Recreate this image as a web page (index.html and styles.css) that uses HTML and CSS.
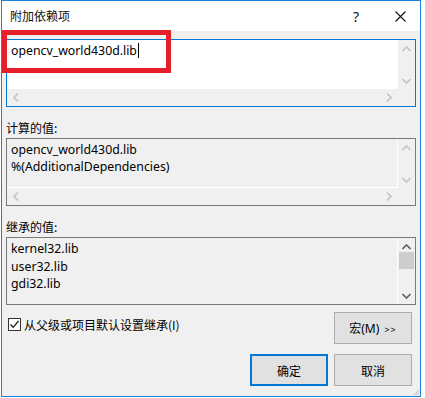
FILE: index.html
```html
<!DOCTYPE html>
<html lang="zh-CN">
<head>
    <meta charset="UTF-8">
    <title>附加依赖项</title>
    <link rel="stylesheet" href="styles.css">
</head>
<body>
    <div class="dialog">
        <div class="titlebar">
            <span class="title">附加依赖项</span>
            <span class="help">?</span>
            <svg class="close" width="11" height="11" viewBox="0 0 11 11">
                <path d="M0.5 0.5 L10.5 10.5 M10.5 0.5 L0.5 10.5" stroke="#111" stroke-width="1.1" fill="none"/>
            </svg>
        </div>

        <div class="content">
            <!-- editable list -->
            <div class="listbox editable">
                <div class="list-main">
                    <div class="list-text"><span>opencv_world430d.lib</span><span class="caret"></span></div>
                    <div class="vscroll">
                        <svg class="arrow" width="9" height="6" viewBox="0 0 9 6"><path d="M0.5 5 L4.5 1 L8.5 5" stroke="#c4c4c4" stroke-width="1.6" fill="none"/></svg>
                        <svg class="arrow" width="9" height="6" viewBox="0 0 9 6"><path d="M0.5 1 L4.5 5 L8.5 1" stroke="#c4c4c4" stroke-width="1.6" fill="none"/></svg>
                    </div>
                </div>
                <div class="hscroll">
                    <svg width="6" height="9" viewBox="0 0 6 9"><path d="M5 0.5 L1 4.5 L5 8.5" stroke="#c4c4c4" stroke-width="1.6" fill="none"/></svg>
                    <svg width="6" height="9" viewBox="0 0 6 9"><path d="M1 0.5 L5 4.5 L1 8.5" stroke="#c4c4c4" stroke-width="1.6" fill="none"/></svg>
                    <span class="corner"></span>
                </div>
                <div class="highlight"></div>
            </div>

            <div class="label">计算的值:</div>
            <div class="listbox readonly">
                <div class="list-main">
                    <div class="list-text">
                        <div>opencv_world430d.lib</div>
                        <div>%(AdditionalDependencies)</div>
                    </div>
                    <div class="vscroll">
                        <svg class="arrow" width="9" height="6" viewBox="0 0 9 6"><path d="M0.5 5 L4.5 1 L8.5 5" stroke="#c4c4c4" stroke-width="1.6" fill="none"/></svg>
                        <svg class="arrow" width="9" height="6" viewBox="0 0 9 6"><path d="M0.5 1 L4.5 5 L8.5 1" stroke="#c4c4c4" stroke-width="1.6" fill="none"/></svg>
                    </div>
                </div>
                <div class="hscroll">
                    <svg width="6" height="9" viewBox="0 0 6 9"><path d="M5 0.5 L1 4.5 L5 8.5" stroke="#c4c4c4" stroke-width="1.6" fill="none"/></svg>
                    <svg width="6" height="9" viewBox="0 0 6 9"><path d="M1 0.5 L5 4.5 L1 8.5" stroke="#c4c4c4" stroke-width="1.6" fill="none"/></svg>
                    <span class="corner"></span>
                </div>
            </div>

            <div class="label">继承的值:</div>
            <div class="listbox readonly inherited">
                <div class="list-main">
                    <div class="list-text">
                        <div>kernel32.lib</div>
                        <div>user32.lib</div>
                        <div>gdi32.lib</div>
                    </div>
                    <div class="vscroll">
                        <svg class="arrow" width="9" height="6" viewBox="0 0 9 6"><path d="M0.5 5 L4.5 1 L8.5 5" stroke="#606060" stroke-width="1.6" fill="none"/></svg>
                        <span class="thumb"></span>
                        <svg class="arrow down" width="9" height="6" viewBox="0 0 9 6"><path d="M0.5 1 L4.5 5 L8.5 1" stroke="#606060" stroke-width="1.6" fill="none"/></svg>
                    </div>
                </div>
            </div>

            <div class="options">
                <label class="check">
                    <span class="box">
                        <svg width="11" height="11" viewBox="0 0 11 11"><path d="M1.5 5.5 L4.2 8.3 L9.5 2" stroke="#222" stroke-width="1.3" fill="none"/></svg>
                    </span>
                    从父级或项目默认设置继承(I)
                </label>
                <button class="btn macro">宏(M) <span class="chev">&gt;&gt;</span></button>
            </div>

            <div class="actions">
                <button class="btn default">确定</button>
                <button class="btn">取消</button>
            </div>

            <svg class="grip" width="7" height="7" viewBox="0 0 7 7">
                <path d="M6 1 L1 6 M6 3.5 L3.5 6 M6 6 L6 6" stroke="#b8b8b8" stroke-width="1" fill="none"/>
            </svg>
        </div>
    </div>
</body>
</html>
```

FILE: styles.css
```css
body {
    margin: 0;
    background: #fff;
    font-family: "Noto Sans CJK SC", sans-serif;
    font-size: 12px;
    color: #000;
}

.dialog {
    width: 420px;
    height: 397px;
    margin-left: 1px;
    box-sizing: border-box;
    border: 1px solid #1a82d8;
    display: flex;
    flex-direction: column;
    background: #f0f0f0;
}

.titlebar {
    height: 30px;
    flex: none;
    background: #fff;
    display: flex;
    align-items: center;
    padding-left: 8px;
    padding-right: 14px;
}

.title {
    flex: 1;
    color: #111;
    padding-bottom: 1px;
}

.help {
    font-family: "Noto Sans", sans-serif;
    font-size: 14px;
    margin-right: 36px;
    color: #111;
}

.close {
    display: block;
}

.content {
    position: relative;
    flex: 1;
    padding: 8px 4px 0 4px;
}

.listbox {
    position: relative;
    box-sizing: border-box;
    height: 68px;
    border: 1px solid #7a7a7a;
    display: flex;
    flex-direction: column;
    font-family: "Noto Sans", sans-serif;
    font-size: 12.3px;
}

.listbox.editable {
    border-color: #0078d7;
    background: #f0f0f0;
}

.listbox.editable .list-text {
    background: #fff;
}

.list-main {
    flex: 1;
    display: flex;
    min-height: 0;
}

.list-text {
    flex: 1;
    padding: 2px 4px 0 4px;
    line-height: 17px;
    border-right: 1px solid #fff;
}

.inherited .list-text {
    line-height: 17.5px;
}

.readonly .list-text {
    border-bottom: 1px solid #fff;
}

.inherited .list-text {
    border-bottom: none;
}

.caret {
    display: inline-block;
    width: 1px;
    height: 15px;
    margin-left: 1px;
    background: #000;
    vertical-align: -3px;
}

.vscroll {
    width: 17px;
    display: flex;
    flex-direction: column;
    align-items: center;
    justify-content: space-between;
    padding: 6px 0 5px;
    box-sizing: border-box;
}

.inherited .vscroll {
    justify-content: flex-start;
}

.thumb {
    width: 15px;
    height: 17px;
    background: #cdcdcd;
    margin-top: 2px;
}

.inherited .down {
    margin-top: auto;
}

.hscroll {
    height: 17px;
    display: flex;
    align-items: center;
    padding-left: 6px;
}

.hscroll svg:nth-child(2) {
    margin-left: auto;
    margin-right: 6px;
}

.corner {
    width: 17px;
}

.highlight {
    position: absolute;
    left: -5px;
    top: -10px;
    width: 169px;
    height: 43px;
    box-sizing: border-box;
    border: 5px solid #e5202a;
}

.label {
    height: 17px;
    line-height: 17px;
    padding-top: 12px;
    margin-bottom: 2px;
}

.options {
    display: flex;
    justify-content: space-between;
    align-items: flex-start;
    margin-top: 7px;
    padding-right: 4px;
}

.check {
    display: flex;
    align-items: center;
    gap: 3px;
    margin-top: 4px;
    margin-left: 2px;
}

.box {
    width: 13px;
    height: 13px;
    box-sizing: border-box;
    border: 1px solid #333;
    background: #fff;
    display: flex;
    align-items: center;
    justify-content: center;
}

.box svg {
    display: block;
}

.btn {
    width: 78px;
    height: 32px;
    box-sizing: border-box;
    border: 1px solid #adadad;
    background: #e1e1e1;
    font-family: "Noto Sans CJK SC", sans-serif;
    font-size: 12px;
    color: #000;
    padding: 0;
}

.macro {
    font-family: "Noto Sans", "Noto Sans CJK SC", sans-serif;
    font-size: 12px;
}

.chev {
    font-size: 9px;
    letter-spacing: 1px;
    margin-left: 2px;
}

.btn.default {
    border: 2px solid #0078d7;
}

.actions {
    display: flex;
    justify-content: flex-end;
    gap: 6px;
    margin-top: 10px;
    padding-right: 4px;
}

.grip {
    position: absolute;
    right: 0;
    bottom: 0;
}
```
